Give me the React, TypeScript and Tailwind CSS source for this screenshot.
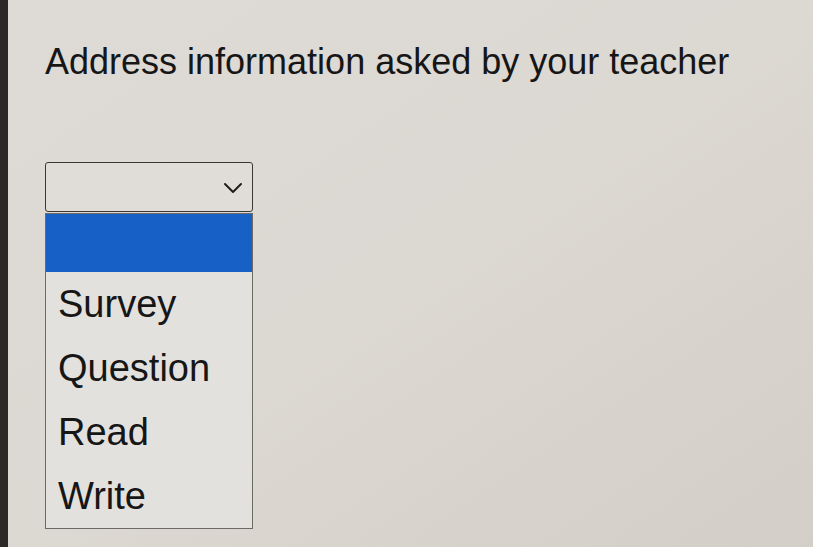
const options = ['Survey', 'Question', 'Read', 'Write'];

const App = () => {
    return (
        <div className="w-[813px] h-[547px] flex overflow-hidden bg-[#dbd7d1] font-['Liberation_Sans',Arial,sans-serif] text-[#161616]">
            <div className="w-[8px] shrink-0 bg-[#2c2927]" />
            <div className="flex-1 flex flex-col pl-[37px] pt-[44px] bg-gradient-to-br from-[#dedad5] via-[#dcd8d2] to-[#d3cec7]">
                <h1 className="text-[36px] leading-[36px] whitespace-nowrap">Address information asked by your teacher</h1>

                <div className="mt-[82px] w-[208px] flex flex-col">
                    <div className="h-[50px] border border-[#3a3835] rounded-[3px] bg-[#e0ddd8] flex items-center justify-end pr-[8px]">
                        <svg width="22" height="12" viewBox="0 0 22 12" fill="none" stroke="#1f1d1b" strokeWidth="2" strokeLinecap="round" strokeLinejoin="round" className="mt-[2px]">
                            <path d="M3 2l8 8 8-8" />
                        </svg>
                    </div>
                    <div className="mt-[1px] border border-[#6d6a66] bg-[#e3e1dd] flex flex-col">
                        <div className="h-[58px] bg-[#1761c6]" />
                        {options.map((o) => (
                            <div key={o} className="h-[64px] pl-[12px] text-[38px] leading-[64px]">
                                {o}
                            </div>
                        ))}
                    </div>
                </div>
            </div>
        </div>
    );
};

export default App;
